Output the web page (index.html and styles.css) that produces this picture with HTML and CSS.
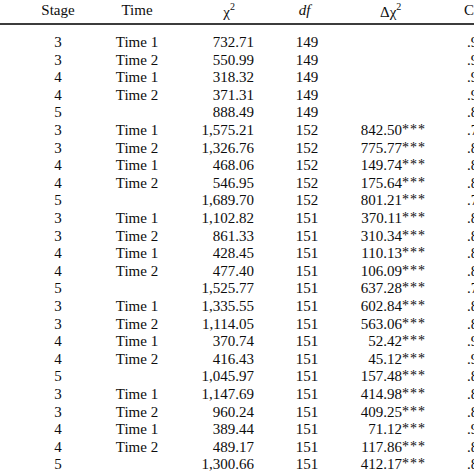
FILE: index.html
```html
<!DOCTYPE html>
<html>
<head>
<meta charset="utf-8">
<link rel="stylesheet" href="styles.css">
</head>
<body>
<div class="table">
  <div class="row head">
    <div class="c stage">Stage</div>
    <div class="c time">Time</div>
    <div class="c chi">χ<sup class="sq">2</sup></div>
    <div class="c df"><i>df</i></div>
    <div class="c dchi">Δχ<sup class="sq">2</sup></div>
    <div class="c cfi">CFI</div>
  </div>
  <div class="body">
    <div class="row"><div class="c stage">3</div><div class="c time">Time 1</div><div class="c chi">732.71</div><div class="c df">149</div><div class="c dchi"></div><div class="c cfi">.95</div></div>
    <div class="row"><div class="c stage">3</div><div class="c time">Time 2</div><div class="c chi">550.99</div><div class="c df">149</div><div class="c dchi"></div><div class="c cfi">.96</div></div>
    <div class="row"><div class="c stage">4</div><div class="c time">Time 1</div><div class="c chi">318.32</div><div class="c df">149</div><div class="c dchi"></div><div class="c cfi">.97</div></div>
    <div class="row"><div class="c stage">4</div><div class="c time">Time 2</div><div class="c chi">371.31</div><div class="c df">149</div><div class="c dchi"></div><div class="c cfi">.96</div></div>
    <div class="row"><div class="c stage">5</div><div class="c time"></div><div class="c chi">888.49</div><div class="c df">149</div><div class="c dchi"></div><div class="c cfi">.89</div></div>
    <div class="row"><div class="c stage">3</div><div class="c time">Time 1</div><div class="c chi">1,575.21</div><div class="c df">152</div><div class="c dchi">842.50<sup class="ast">***</sup></div><div class="c cfi">.78</div></div>
    <div class="row"><div class="c stage">3</div><div class="c time">Time 2</div><div class="c chi">1,326.76</div><div class="c df">152</div><div class="c dchi">775.77<sup class="ast">***</sup></div><div class="c cfi">.82</div></div>
    <div class="row"><div class="c stage">4</div><div class="c time">Time 1</div><div class="c chi">468.06</div><div class="c df">152</div><div class="c dchi">149.74<sup class="ast">***</sup></div><div class="c cfi">.88</div></div>
    <div class="row"><div class="c stage">4</div><div class="c time">Time 2</div><div class="c chi">546.95</div><div class="c df">152</div><div class="c dchi">175.64<sup class="ast">***</sup></div><div class="c cfi">.85</div></div>
    <div class="row"><div class="c stage">5</div><div class="c time"></div><div class="c chi">1,689.70</div><div class="c df">152</div><div class="c dchi">801.21<sup class="ast">***</sup></div><div class="c cfi">.71</div></div>
    <div class="row"><div class="c stage">3</div><div class="c time">Time 1</div><div class="c chi">1,102.82</div><div class="c df">151</div><div class="c dchi">370.11<sup class="ast">***</sup></div><div class="c cfi">.84</div></div>
    <div class="row"><div class="c stage">3</div><div class="c time">Time 2</div><div class="c chi">861.33</div><div class="c df">151</div><div class="c dchi">310.34<sup class="ast">***</sup></div><div class="c cfi">.86</div></div>
    <div class="row"><div class="c stage">4</div><div class="c time">Time 1</div><div class="c chi">428.45</div><div class="c df">151</div><div class="c dchi">110.13<sup class="ast">***</sup></div><div class="c cfi">.89</div></div>
    <div class="row"><div class="c stage">4</div><div class="c time">Time 2</div><div class="c chi">477.40</div><div class="c df">151</div><div class="c dchi">106.09<sup class="ast">***</sup></div><div class="c cfi">.88</div></div>
    <div class="row"><div class="c stage">5</div><div class="c time"></div><div class="c chi">1,525.77</div><div class="c df">151</div><div class="c dchi">637.28<sup class="ast">***</sup></div><div class="c cfi">.76</div></div>
    <div class="row"><div class="c stage">3</div><div class="c time">Time 1</div><div class="c chi">1,335.55</div><div class="c df">151</div><div class="c dchi">602.84<sup class="ast">***</sup></div><div class="c cfi">.82</div></div>
    <div class="row"><div class="c stage">3</div><div class="c time">Time 2</div><div class="c chi">1,114.05</div><div class="c df">151</div><div class="c dchi">563.06<sup class="ast">***</sup></div><div class="c cfi">.84</div></div>
    <div class="row"><div class="c stage">4</div><div class="c time">Time 1</div><div class="c chi">370.74</div><div class="c df">151</div><div class="c dchi">52.42<sup class="ast">***</sup></div><div class="c cfi">.90</div></div>
    <div class="row"><div class="c stage">4</div><div class="c time">Time 2</div><div class="c chi">416.43</div><div class="c df">151</div><div class="c dchi">45.12<sup class="ast">***</sup></div><div class="c cfi">.90</div></div>
    <div class="row"><div class="c stage">5</div><div class="c time"></div><div class="c chi">1,045.97</div><div class="c df">151</div><div class="c dchi">157.48<sup class="ast">***</sup></div><div class="c cfi">.85</div></div>
    <div class="row"><div class="c stage">3</div><div class="c time">Time 1</div><div class="c chi">1,147.69</div><div class="c df">151</div><div class="c dchi">414.98<sup class="ast">***</sup></div><div class="c cfi">.84</div></div>
    <div class="row"><div class="c stage">3</div><div class="c time">Time 2</div><div class="c chi">960.24</div><div class="c df">151</div><div class="c dchi">409.25<sup class="ast">***</sup></div><div class="c cfi">.86</div></div>
    <div class="row"><div class="c stage">4</div><div class="c time">Time 1</div><div class="c chi">389.44</div><div class="c df">151</div><div class="c dchi">71.12<sup class="ast">***</sup></div><div class="c cfi">.90</div></div>
    <div class="row"><div class="c stage">4</div><div class="c time">Time 2</div><div class="c chi">489.17</div><div class="c df">151</div><div class="c dchi">117.86<sup class="ast">***</sup></div><div class="c cfi">.88</div></div>
    <div class="row"><div class="c stage">5</div><div class="c time"></div><div class="c chi">1,300.66</div><div class="c df">151</div><div class="c dchi">412.17<sup class="ast">***</sup></div><div class="c cfi">.83</div></div>
  </div>
</div>
</body>
</html>
```
FILE: styles.css
```css
html, body {
  margin: 0;
  padding: 0;
  background: #ffffff;
}
body {
  width: 474px;
  height: 474px;
  overflow: hidden;
  font-family: "Liberation Serif", "Times New Roman", serif;
  font-size: 15px;
  color: #0d0d0d;
}
.table {
  width: 483px;
  padding-top: 2px;
}
.row {
  display: grid;
  grid-template-columns: 84px 74px 80px 106px 66px 57px;
  padding-left: 16px;
  height: 17.6px;
  line-height: 17.6px;
  white-space: nowrap;
}
.head {
  padding-bottom: 3.5px;
  border-bottom: 2px solid #3c3c3c;
}
.body {
  margin-top: 9px;
}
.stage, .time, .df {
  text-align: center;
}
.chi, .dchi {
  text-align: right;
}
.head .chi {
  padding-right: 19px;
}
.head .dchi {
  text-align: left;
  padding-left: 20px;
}
.head .df {
  padding-right: 5px;
}
.cfi {
  padding-left: 41px;
}
.head .cfi {
  padding-left: 38px;
}
.sq {
  font-size: 10px;
  line-height: 1;
  vertical-align: 7px;
}
.ast {
  font-size: 14px;
  line-height: 1;
  letter-spacing: 1px;
  vertical-align: 1px;
}
i {
  font-style: italic;
}
```
